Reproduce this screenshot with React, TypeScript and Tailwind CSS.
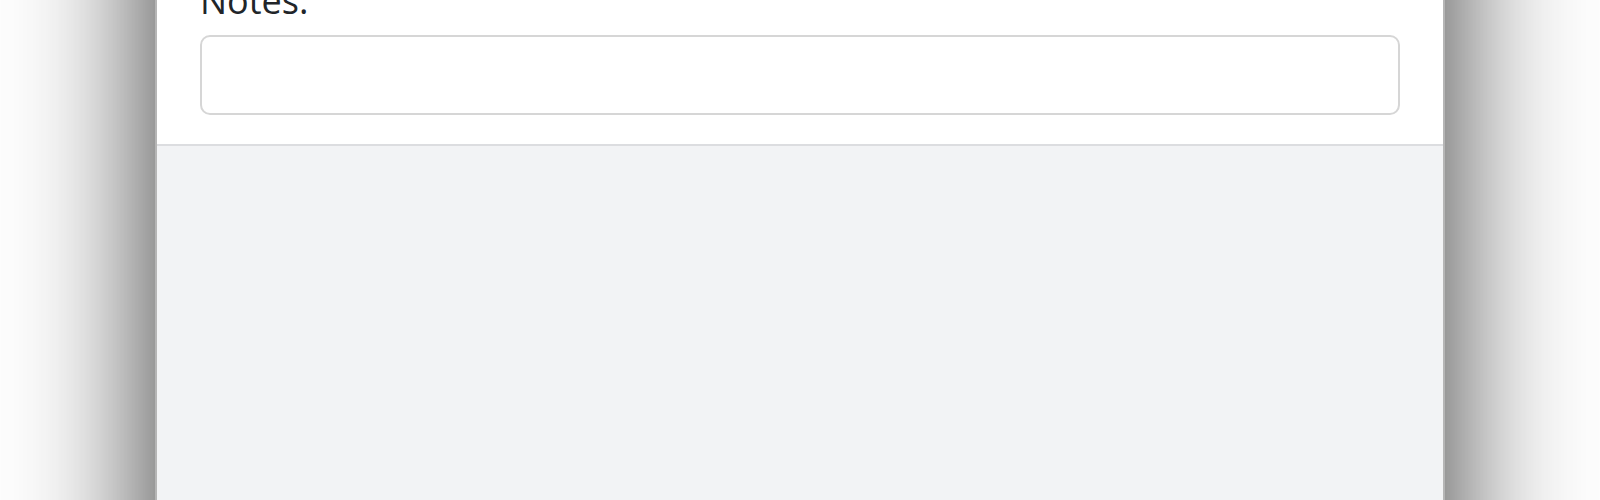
import React from "react";

export default function App() {
  return (
    <div className="w-[1600px] h-[500px] overflow-hidden bg-white flex justify-center">
      <div className="-mt-[300px] w-[1290px] h-[1100px] shrink-0 flex flex-col border-x-2 border-[#b5b5b5] bg-[#f2f3f5] shadow-[0_0_135px_rgba(0,0,0,0.8)]">
        <div className="bg-white border-b-2 border-[#dcdde0] h-[446px] pt-[287px] px-[43px] flex flex-col">
          <label
            className="block text-[36px] leading-[27px] text-[#212529]"
            style={{ fontFamily: '"Open Sans", "Noto Sans", sans-serif' }}
          >
            Notes:
          </label>
          <input
            type="text"
            className="mt-[21px] w-[1200px] h-[80px] rounded-[10px] border-2 border-[#d6d6d6] bg-white outline-none"
          />
        </div>
        <div className="flex-1 bg-[#f2f3f5]" />
      </div>
    </div>
  );
}
